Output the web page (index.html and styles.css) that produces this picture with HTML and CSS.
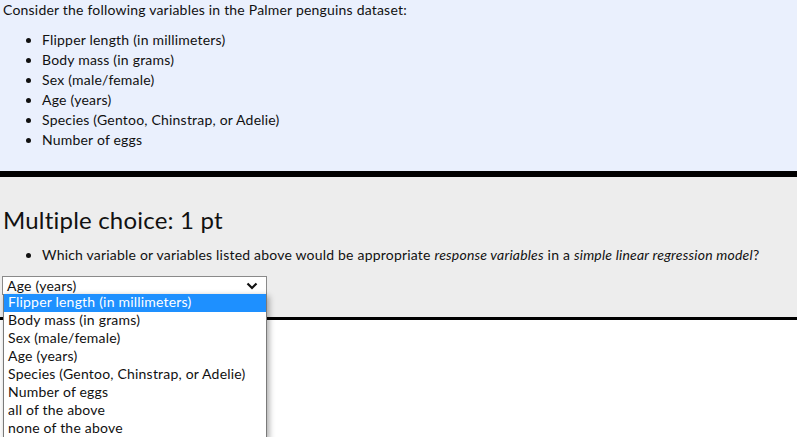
FILE: index.html
```html
<!DOCTYPE html>
<html>
<head>
<meta charset="utf-8">
<link rel="stylesheet" href="styles.css">
</head>
<body>
<section class="intro">
  <p class="lead">Consider the following variables in the Palmer penguins dataset:</p>
  <ul class="vars">
    <li>Flipper length (in millimeters)</li>
    <li>Body mass (in grams)</li>
    <li>Sex (male/female)</li>
    <li>Age (years)</li>
    <li>Species (Gentoo, Chinstrap, or Adelie)</li>
    <li>Number of eggs</li>
  </ul>
</section>
<section class="question">
  <h2 class="title">Multiple choice: 1 pt</h2>
  <ul class="vars q">
    <li>Which variable or variables listed above would be appropriate <em>response variables</em> in a <em>simple linear regression model</em>?</li>
  </ul>
  <div class="select-wrap">
    <div class="select">
      <span>Age (years)</span>
      <svg class="chev" width="12" height="8" viewBox="0 0 12 8"><path d="M1.5 1.5 L6 6 L10.5 1.5" fill="none" stroke="#111" stroke-width="2.2"/></svg>
    </div>
    <div class="menu">
      <div class="opt active">Flipper length (in millimeters)</div>
      <div class="opt">Body mass (in grams)</div>
      <div class="opt">Sex (male/female)</div>
      <div class="opt">Age (years)</div>
      <div class="opt">Species (Gentoo, Chinstrap, or Adelie)</div>
      <div class="opt">Number of eggs</div>
      <div class="opt">all of the above</div>
      <div class="opt">none of the above</div>
    </div>
  </div>
</section>
<section class="rest"></section>
</body>
</html>
```
FILE: styles.css
```css
html, body {
  margin: 0;
  padding: 0;
  background: #fff;
}
body {
  font-family: Lato, "Open Sans", sans-serif;
  font-size: 14px;
  line-height: 20px;
  letter-spacing: 0.2px;
  color: #111;
  overflow: hidden;
  height: 437px;
}
.intro {
  background: #eaf0fd;
  padding: 0 3px 21px;
  border-bottom: 6px solid #000;
}
.lead {
  margin: 0;
}
.vars {
  margin: 10px 0 0;
  padding-left: 39px;
}
.question {
  background: #ededed;
  padding: 29px 3px 22px 2px;
  border-bottom: 3px solid #000;
}
.title {
  margin: 0;
  font-size: 24px;
  line-height: 28px;
  font-weight: normal;
  padding-left: 1px;
}
.q {
  margin-top: 11px;
  padding-left: 40px;
}
.select-wrap {
  position: relative;
  margin-top: 11px;
  width: 265px;
}
.select {
  height: 17px;
  border: 1px solid #8a8a8a;
  background: #fff;
  display: flex;
  align-items: center;
  justify-content: space-between;
  padding: 0 8px 0 4px;
  line-height: 17px;
}
.chev {
  display: block;
}
.menu {
  position: absolute;
  left: 1px;
  top: 18px;
  width: 262px;
  background: #fff;
  border: 1px solid #7a7a7a;
  border-top: none;
  box-shadow: 2px 2px 6px rgba(0,0,0,0.35);
  z-index: 2;
}
.opt {
  height: 18px;
  line-height: 16px;
  padding-left: 4px;
  white-space: nowrap;
}
.opt.active {
  background: #1e90ff;
  color: #fff;
}
.rest {
  height: 200px;
  background: #fff;
}
```
